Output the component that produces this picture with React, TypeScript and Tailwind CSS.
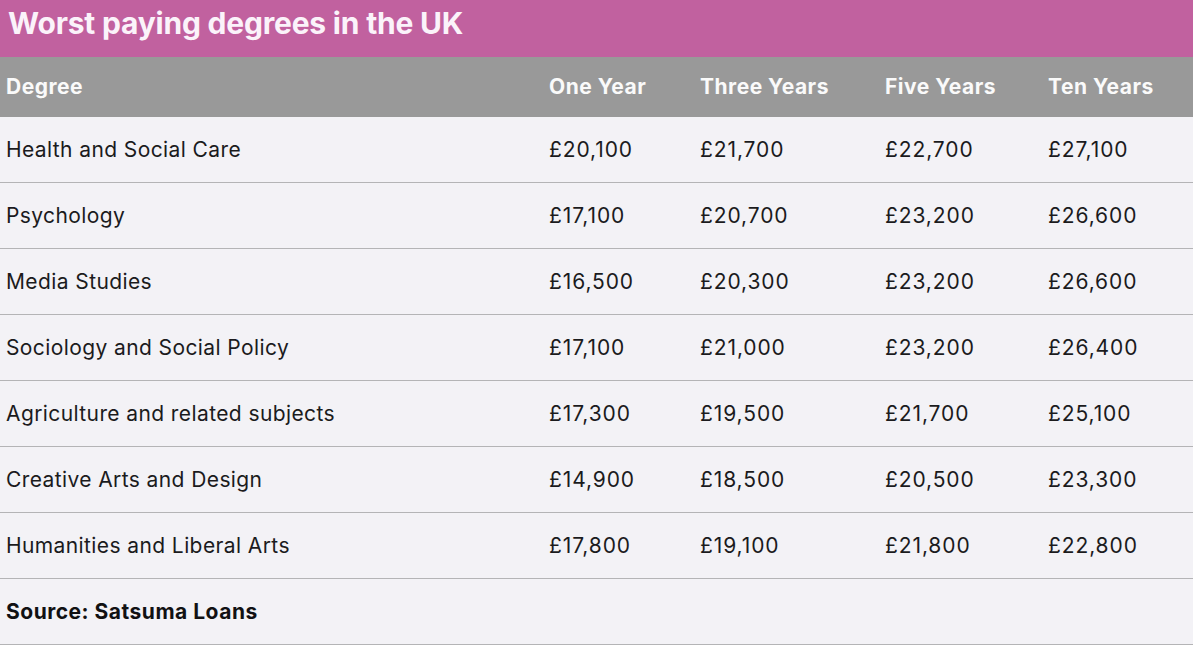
import React from "react";

type Row = {
  degree: string;
  one: string;
  three: string;
  five: string;
  ten: string;
};

const rows: Row[] = [
  { degree: "Health and Social Care", one: "£20,100", three: "£21,700", five: "£22,700", ten: "£27,100" },
  { degree: "Psychology", one: "£17,100", three: "£20,700", five: "£23,200", ten: "£26,600" },
  { degree: "Media Studies", one: "£16,500", three: "£20,300", five: "£23,200", ten: "£26,600" },
  { degree: "Sociology and Social Policy", one: "£17,100", three: "£21,000", five: "£23,200", ten: "£26,400" },
  { degree: "Agriculture and related subjects", one: "£17,300", three: "£19,500", five: "£21,700", ten: "£25,100" },
  { degree: "Creative Arts and Design", one: "£14,900", three: "£18,500", five: "£20,500", ten: "£23,300" },
  { degree: "Humanities and Liberal Arts", one: "£17,800", three: "£19,100", five: "£21,800", ten: "£22,800" },
];

const cols = "grid grid-cols-[543px_151px_185px_163px_1fr] items-center pl-[6px]";

export default function App() {
  return (
    <div className="w-[1198px] h-[648px] bg-white overflow-hidden font-['Inter',sans-serif]">
      <div className="w-[1193px] bg-[#f3f2f6]">
        <div className="h-[57px] bg-[#c1619f] pl-[8px] pt-[6px]">
          <h1 className="text-[30px] leading-[34px] font-bold text-[#fbf3fa] tracking-[-0.2px]">
            Worst paying degrees in the UK
          </h1>
        </div>
        <div className={`${cols} h-[60px] bg-[#999999] text-[21px] font-bold tracking-[0.5px] text-[#fafafa]`}>
          <div>Degree</div>
          <div>One Year</div>
          <div>Three Years</div>
          <div>Five Years</div>
          <div>Ten Years</div>
        </div>
        {rows.map((r) => (
          <div
            key={r.degree}
            className={`${cols} h-[66px] border-b border-[#b4b4b6] text-[21px] tracking-[0.4px] text-[#1b1b1d]`}
          >
            <div>{r.degree}</div>
            <div className="tracking-[0.9px]">{r.one}</div>
            <div className="tracking-[0.9px]">{r.three}</div>
            <div className="tracking-[0.9px]">{r.five}</div>
            <div className="tracking-[0.9px]">{r.ten}</div>
          </div>
        ))}
        <div className="h-[66px] border-b border-[#b4b4b6] flex items-center pl-[6px] text-[21px] font-bold tracking-[0.5px] text-[#111113]">
          Source: Satsuma Loans
        </div>
      </div>
    </div>
  );
}
